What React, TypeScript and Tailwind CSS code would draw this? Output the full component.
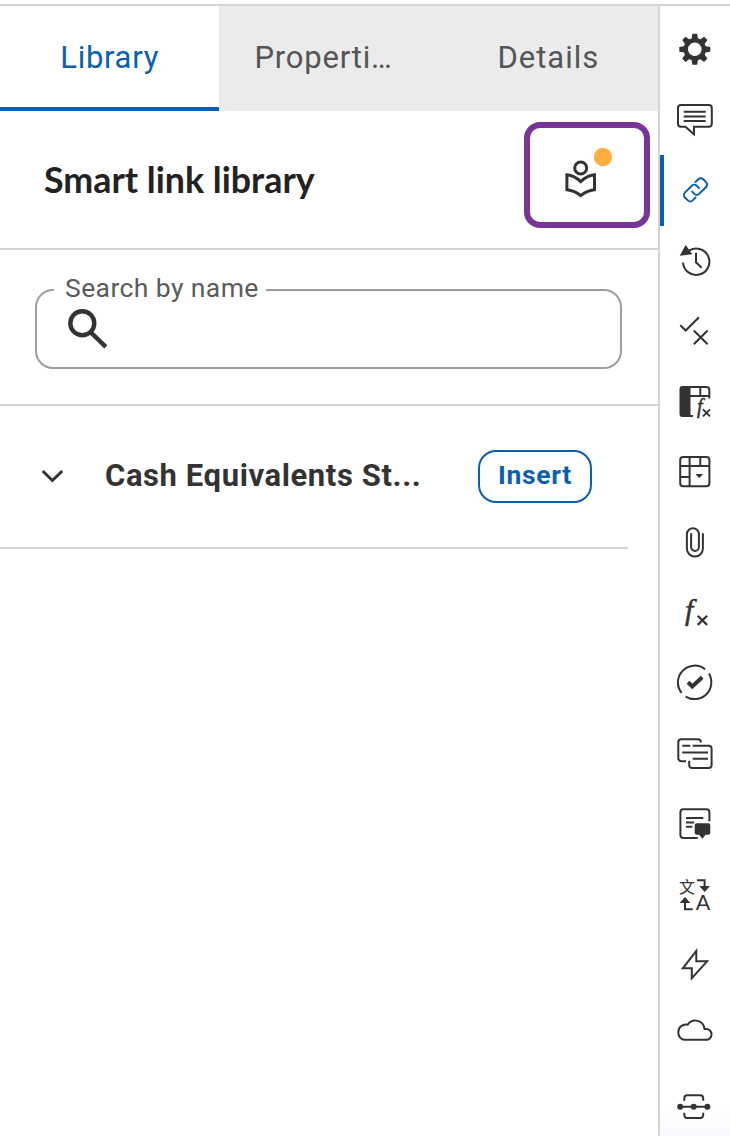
import type { ReactNode } from "react";

type RailItem = {
  label: string;
  icon: ReactNode;
  active?: boolean;
};

const tabs = [
  { label: "Library", className: "border-b-4 border-[#0b5fb0] pt-1 text-[#0b5fb0] tracking-[0.7px]" },
  { label: "Properti…", className: "bg-[#ebebeb] pr-[11px] text-[#555] tracking-[0.8px]" },
  { label: "Details", className: "bg-[#ebebeb] text-[#555] tracking-[1px]" },
];

const toothAngles = [0, 45, 90, 135, 180, 225, 270, 315];

const railItems: RailItem[] = [
  {
    label: "Settings",
    icon: (
      <>
        <circle cx="19.8" cy="20.3" r="9" strokeWidth="4.4" />
        {toothAngles.map((angle) => (
          <path
            key={angle}
            d="M16.5 10.5 17.4 4.8H22.2L23.1 10.5Z"
            fill="currentColor"
            stroke="none"
            transform={`rotate(${angle} 19.8 20.3)`}
          />
        ))}
      </>
    ),
  },
  {
    label: "Comments",
    icon: (
      <>
        <path d="M6 5h27.8a3 3 0 0 1 3 3v15.7a3 3 0 0 1-3 3H19v7.6l-8.6-7.6H6a3 3 0 0 1-3-3V8a3 3 0 0 1 3-3Z" />
        <path d="M8.7 11.7h22M8.7 16.4h22M8.7 21h22" />
      </>
    ),
  },
  {
    label: "Smart links",
    active: true,
    icon: (
      <g transform="rotate(-45 20.5 19.8)" strokeLinecap="round">
        <path d="M26 14.3h4a3.4 3.4 0 0 1 3.4 3.4v4.2a3.4 3.4 0 0 1-3.4 3.4h-9.8a3.4 3.4 0 0 1-3.4-3.4v-3.2" />
        <path d="M15 25.3h-4a3.4 3.4 0 0 1-3.4-3.4v-4.2a3.4 3.4 0 0 1 3.4-3.4h9.8a3.4 3.4 0 0 1 3.4 3.4v3.2" />
      </g>
    ),
  },
  {
    label: "History",
    icon: (
      <>
        <path d="M8 21.5a13.2 13.2 0 1 0 5.6-11.6M21 11.7v9.6l5.6 5.4" />
        <path d="M10.7 4 4.7 14.7 17.3 13.3Z" fill="currentColor" stroke="none" />
      </>
    ),
  },
  {
    label: "Validation",
    icon: <path d="M5.3 14.2l5.4 5.3L24 6.2M18.8 19.5l13.8 13.8M32.6 19.5 18.8 33.3" />,
  },
  {
    label: "Table formulas",
    icon: (
      <>
        <path d="M7.5 4h8v31h-8a3 3 0 0 1-3-3V7a3 3 0 0 1 3-3Z" fill="currentColor" stroke="none" />
        <path d="M14 5h17.3a3 3 0 0 1 3 3v8.5M15 14h19M25.3 5v9M14 34h4" />
        <text x="22" y="31" className="font-['Liberation_Serif'] text-[20px] italic" fill="currentColor" strokeWidth="0.5">f</text>
        <path d="M28 27.3l7 7M35 27.3l-7 7" strokeWidth="1.9" />
      </>
    ),
  },
  {
    label: "Table options",
    icon: (
      <>
        <rect x="5.2" y="5" width="29.2" height="29.2" rx="3" />
        <path d="M5 14h29.4M14.6 5v29M25.3 5v9M5 25h9.6" />
        <path d="M20.5 22h7.6l-3.8 4Z" fill="currentColor" stroke="none" />
      </>
    ),
  },
  {
    label: "Attachments",
    icon: <path d="M27.9 11v14.6a8 8 0 0 1-16 0V11.2a6 6 0 0 1 12 0V24a3.9 3.9 0 0 1-7.8 0V11" strokeLinecap="round" />,
  },
  {
    label: "Functions",
    icon: (
      <>
        <text x="10" y="26.6" className="font-['Liberation_Serif'] text-[30px] italic" fill="currentColor" strokeWidth="0.5">f</text>
        <path d="M22.7 22.7l9.4 9.2M32.1 22.7l-9.4 9.2" strokeWidth="2.2" />
      </>
    ),
  },
  {
    label: "Tasks",
    icon: (
      <>
        <path d="M6.6 28.9A16.8 16.8 0 0 1 30.1 5.2M33.9 9.6A16.8 16.8 0 0 1 10.7 32.6" />
        <path d="M13 18.2l4.3 4.2L27.2 13.2" strokeWidth="4" />
      </>
    ),
  },
  {
    label: "Cards",
    icon: (
      <>
        <path d="M25.9 8.5V8a3 3 0 0 0-3-2.8H6.3a3 3 0 0 0-3 3v16a3 3 0 0 0 3 3h4.7" />
        <path d="M17.7 11.8h15.9a3 3 0 0 1 3 3V31a3 3 0 0 1-3 3H17.2a3 3 0 0 1-3-3v-4.3" />
        <path d="M7.3 11.8h8M7.3 18.4h25.7M17.7 24.8h15.3" />
      </>
    ),
  },
  {
    label: "Notes",
    icon: (
      <>
        <path d="M34.4 16.3V7.2a3 3 0 0 0-3-3H8.4a3 3 0 0 0-3 3v22.9a3 3 0 0 0 3 3h14.3M11 13.1h17.3M11 17.4h8.2M11 21.8h6.3" />
        <path d="M21.7 18.3h11.6a2 2 0 0 1 2 2v7.4a2 2 0 0 1-2 2h-2.7l-3.2 4-3.2-4h-2.5a2 2 0 0 1-2-2v-7.4a2 2 0 0 1 2-2Z" fill="currentColor" stroke="none" />
      </>
    ),
  },
  {
    label: "Translate",
    icon: (
      <>
        <text x="4" y="18" className="font-['Noto_Sans_CJK_SC',sans-serif] text-[16px]" fill="currentColor" stroke="none">文</text>
        <text x="20.7" y="35" className="font-[Lato] text-[21.5px]" fill="currentColor" stroke="none">A</text>
        <path d="M22 5.3h7.6V12M10 27v7.3h7.7" />
        <path d="M24.3 11H35l-5.3 6ZM4.7 28h10.6L10 22Z" fill="currentColor" stroke="none" />
      </>
    ),
  },
  {
    label: "Automations",
    icon: <path d="M21.3 5v10.3h10.8L16.8 32.2v-9.9H7.8Z" />,
  },
  {
    label: "Cloud",
    icon: <path d="M9.7 23.8h21.4a5.4 5.4 0 0 0 0-10.9h-1.6a9.2 9.2 0 0 0-16.8-4.2c-5.4-.8-9.4 2.6-9.4 7.5 0 4.4 2.7 7.6 6.4 7.6Z" />,
  },
  {
    label: "Workflow",
    icon: (
      <>
        <path d="M9.3 13.7v-2.4a3 3 0 0 1 3-3h12.9a3 3 0 0 1 3 3v2.4M9.3 25.8v2.3a3 3 0 0 0 3 3h12.9a3 3 0 0 0 3-3v-2.3M5 19.7h27.5" />
        <g fill="currentColor" stroke="none">
          <circle cx="5.2" cy="19.7" r="3" />
          <circle cx="18.7" cy="19.7" r="3" />
          <circle cx="32.4" cy="19.7" r="3" />
        </g>
      </>
    ),
  },
];

function IconRail() {
  return (
    <nav className="w-[70px] shrink-0 bg-[linear-gradient(to_top,#f9f9fd,white_30px)] pt-2">
      {railItems.map((item) => (
        <button
          key={item.label}
          aria-label={item.label}
          className={
            item.active
              ? "flex h-[70.5px] w-full items-center justify-center border-l-4 border-[#0b5fb0] pr-1 text-[#0b5fb0]"
              : "flex h-[70.5px] w-full items-center justify-center text-[#333]"
          }
        >
          <svg viewBox="0 0 40 40" className="size-10 overflow-visible" fill="none" stroke="currentColor" strokeWidth="2">
            {item.icon}
          </svg>
        </button>
      ))}
    </nav>
  );
}

export default function App() {
  return (
    <div className="h-[1136px] w-[730px] overflow-hidden bg-white pt-1 font-[Roboto,sans-serif]">
      <div className="flex h-full border-t-2 border-[#d4d4d4]">
        <main className="w-[660px] shrink-0 border-r-2 border-[#d4d4d4]">
          {/* Tabs */}
          <div className="grid h-[105px] grid-cols-3 text-[31px]">
            {tabs.map((tab) => (
              <button key={tab.label} className={tab.className}>
                {tab.label}
              </button>
            ))}
          </div>

          {/* Header */}
          <div className="flex h-[139px] items-center justify-between border-b-2 border-[#d4d4d4] pr-2 pl-11">
            <h1 className="font-[Lato] text-[35.8px] font-bold text-[#222]">Smart link library</h1>
            <button
              aria-label="Library guide"
              className="-mt-5 -mb-2.5 flex h-[106px] w-[126px] items-center justify-center rounded-2xl border-6 border-[#773697] text-[#333]"
            >
              <svg viewBox="0 0 60 60" className="size-15" fill="none" stroke="currentColor" strokeWidth="3">
                <circle cx="23.7" cy="23" r="6" />
                <path d="M9.9 29.8c5.5.6 9.8 2.9 13.8 6.8 4-3.9 8.3-6.2 13.8-6.8v15c-5.4.7-9.7 2.5-13.8 5.8-4.1-3.3-8.4-5.1-13.8-5.8Z" />
                <circle cx="45.9" cy="12" r="9.2" fill="#ffae42" stroke="none" />
              </svg>
            </button>
          </div>

          {/* Search */}
          <div className="h-[156px] border-b-2 border-[#d4d4d4] px-[35px] pt-[23px]">
            <fieldset className="h-[96px] w-[587px] rounded-[18px] border-2 border-[#9e9e9e] pl-[17px]">
              <legend className="h-[34px] pr-[7px] pl-[11px] text-[26.5px] leading-[29px] tracking-[0.4px] text-[#5c5c5c]">
                Search by name
              </legend>
              <svg viewBox="0 0 44 44" className="-mt-0.5 ml-[11px] size-11" fill="none" stroke="#333" strokeWidth="4.4">
                <circle cx="17.3" cy="18.3" r="12" />
                <path d="M25.8 27.3 40.8 41.8" />
              </svg>
            </fieldset>
          </div>

          {/* Link row */}
          <div className="flex h-[143px] w-[628px] items-center border-b-2 border-[#d4d4d4] pr-9 pl-10">
            <svg viewBox="0 0 24 24" className="mb-0.5 size-6" fill="none" stroke="#333" strokeWidth="3">
              <path d="M2.7 7 12.4 16.5 22.2 7" />
            </svg>
            <span className="ml-[41px] pb-px text-[31px] font-bold tracking-[0.6px] text-[#333]">Cash Equivalents St...</span>
            <button className="ml-auto h-[53px] w-[114px] rounded-[18px] border-2 border-[#0b5fb0] pb-1 text-[26.5px] font-bold tracking-[0.7px] text-[#0b5fb0]">
              Insert
            </button>
          </div>
        </main>
        <IconRail />
      </div>
    </div>
  );
}
